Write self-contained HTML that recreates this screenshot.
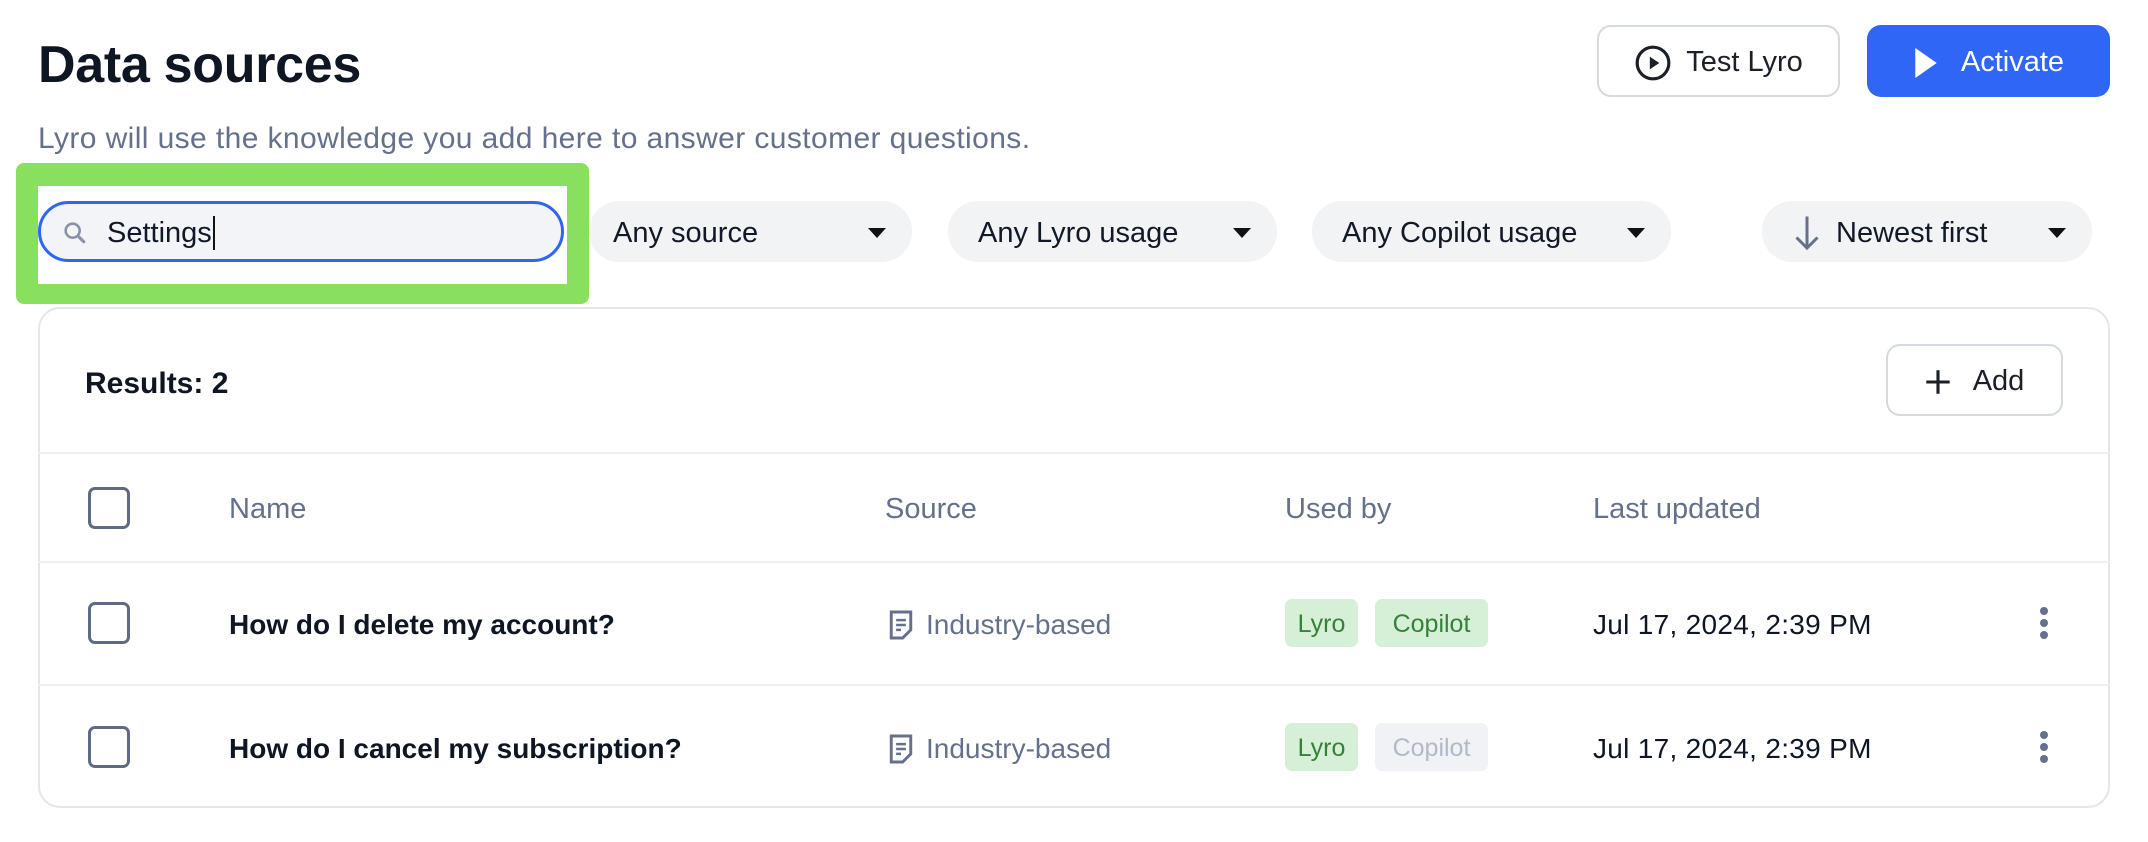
<!DOCTYPE html>
<html><head><meta charset="utf-8"><style>
*{box-sizing:border-box;margin:0;padding:0}
body{width:2148px;height:842px;background:#fff;font-family:"Liberation Sans",sans-serif;color:#111827;position:relative;overflow:hidden}
.abs{position:absolute}
h1{position:absolute;left:38px;top:35px;font-size:52px;font-weight:700;letter-spacing:-0.3px;color:#0f1623}
.sub{left:38px;top:122px;font-size:30px;letter-spacing:0.4px;color:#65718a}
.btn{display:flex;align-items:center;justify-content:center;border-radius:14px;font-size:29px}
.pill{display:flex;align-items:center;background:#f2f3f5;border-radius:30px;height:61px;top:201px;font-size:29px;color:#111827;padding-left:24px;padding-top:3px}
.caret{position:absolute;right:26px;top:27px;width:0;height:0;border-left:9px solid transparent;border-right:9px solid transparent;border-top:10px solid #111}
.cb{position:absolute;left:88px;width:42px;height:42px;border:3.5px solid #5f6b85;border-radius:7px}
.hd{position:absolute;top:493px;font-size:29px;color:#65718a}
.row{position:absolute;font-size:28px}
.line{position:absolute;left:38px;width:2072px;height:2px;background:#eef0f4}
.tag{position:absolute;height:48px;border-radius:7px;font-size:25px;display:flex;align-items:center;justify-content:center;padding-top:2px}
.g{background:#d5f0d6;color:#36813a}
.n{background:#f1f2f5;color:#b2b9c9}
.dots{position:absolute;left:2040px;width:10px}
.dots i{display:block;width:8px;height:8px;border-radius:50%;background:#65718a;margin-bottom:4px}
</style></head><body>
<h1>Data sources</h1>
<div class="abs sub">Lyro will use the knowledge you add here to answer customer questions.</div>

<div class="abs btn" style="left:1597px;top:25px;width:243px;height:72px;border:2px solid #d5d9e0;color:#1b1f27;padding-top:3px">
<svg width="38" height="38" viewBox="0 0 24 24" style="margin-right:14px"><circle cx="12" cy="12" r="10" fill="none" stroke="#1b1f27" stroke-width="2"/><path d="M10 8l6 4-6 4z" fill="#1b1f27"/></svg>Test Lyro</div>
<div class="abs btn" style="left:1867px;top:25px;width:243px;height:72px;background:#2f66f6;color:#fff;padding-top:3px">
<svg width="26" height="30" viewBox="0 0 12 14" style="margin-right:22px"><path d="M1 0l10 7-10 7z" fill="#fff"/></svg>Activate</div>

<div class="abs" style="left:16px;top:163px;width:573px;height:141px;background:#88e05e;border-radius:8px"></div>
<div class="abs" style="left:38px;top:186px;width:529px;height:98px;background:#fff"></div>
<div class="abs" style="left:38px;top:201px;width:526px;height:61px;border:3.5px solid #2f65f5;border-radius:31px;background:#f2f4f7;display:flex;align-items:center;padding-left:20px;font-size:29px;padding-top:3px">
<svg width="28" height="28" viewBox="0 0 24 24" style="margin-right:18px"><circle cx="10" cy="10" r="6" fill="none" stroke="#8891a6" stroke-width="2.2"/><path d="M14.5 14.5l5 5" stroke="#8891a6" stroke-width="2.6" stroke-linecap="round"/></svg>Settings<span style="display:inline-block;width:2px;height:34px;background:#111;margin-left:1px"></span></div>

<div class="abs pill" style="left:589px;width:323px;padding-left:24px">Any source<span class="caret"></span></div>
<div class="abs pill" style="left:948px;width:329px;padding-left:30px">Any Lyro usage<span class="caret"></span></div>
<div class="abs pill" style="left:1312px;width:359px;padding-left:30px">Any Copilot usage<span class="caret"></span></div>
<div class="abs pill" style="left:1762px;width:330px;padding-left:30px">
<svg width="30" height="36" viewBox="0 0 20 24" style="margin-right:14px"><path d="M10 1v21M3 15l7 7 7-7" fill="none" stroke="#65718a" stroke-width="2"/></svg>Newest first<span class="caret"></span></div>

<div class="abs" style="left:38px;top:307px;width:2072px;height:501px;border:2px solid #e3e6eb;border-radius:22px"></div>
<div class="abs" style="left:85px;top:367px;font-size:30px;font-weight:700;color:#0f1623">Results: 2</div>
<div class="abs btn" style="left:1886px;top:344px;width:177px;height:72px;border:2px solid #d5d9e0;color:#1b1f27;font-size:29px;padding-top:3px">
<svg width="26" height="26" viewBox="0 0 20 20" style="margin-right:22px"><path d="M10 1v18M1 10h18" stroke="#1b1f27" stroke-width="2.4"/></svg>Add</div>

<div class="line" style="top:452px"></div>
<div class="line" style="top:561px"></div>
<div class="line" style="top:684px"></div>

<div class="cb" style="top:487px"></div>
<div class="hd" style="left:229px">Name</div>
<div class="hd" style="left:885px">Source</div>
<div class="hd" style="left:1285px">Used by</div>
<div class="hd" style="left:1593px">Last updated</div>

<div class="cb" style="top:602px"></div>
<div class="row" style="left:229px;top:609px;font-weight:700;color:#0f1623">How do I delete my account?</div>
<div class="row" style="left:888px;top:609px;color:#65718a;display:flex;align-items:center"><svg width="26" height="30" viewBox="0 0 16 18" style="margin-right:12px"><path d="M2 1h12v11l-5 5H2z" fill="none" stroke="#65718a" stroke-width="1.8"/><path d="M5 6h6M5 9h6M5 12h3" stroke="#65718a" stroke-width="1.6"/></svg>Industry-based</div>
<div class="tag g" style="left:1285px;top:599px;width:73px">Lyro</div>
<div class="tag g" style="left:1375px;top:599px;width:113px">Copilot</div>
<div class="row" style="left:1593px;top:609px;color:#0f1623;letter-spacing:0.3px">Jul 17, 2024, 2:39 PM</div>
<div class="dots" style="top:607px"><i></i><i></i><i></i></div>

<div class="cb" style="top:726px"></div>
<div class="row" style="left:229px;top:733px;font-weight:700;color:#0f1623">How do I cancel my subscription?</div>
<div class="row" style="left:888px;top:733px;color:#65718a;display:flex;align-items:center"><svg width="26" height="30" viewBox="0 0 16 18" style="margin-right:12px"><path d="M2 1h12v11l-5 5H2z" fill="none" stroke="#65718a" stroke-width="1.8"/><path d="M5 6h6M5 9h6M5 12h3" stroke="#65718a" stroke-width="1.6"/></svg>Industry-based</div>
<div class="tag g" style="left:1285px;top:723px;width:73px">Lyro</div>
<div class="tag n" style="left:1375px;top:723px;width:113px">Copilot</div>
<div class="row" style="left:1593px;top:733px;color:#0f1623;letter-spacing:0.3px">Jul 17, 2024, 2:39 PM</div>
<div class="dots" style="top:731px"><i></i><i></i><i></i></div>
</body></html>
